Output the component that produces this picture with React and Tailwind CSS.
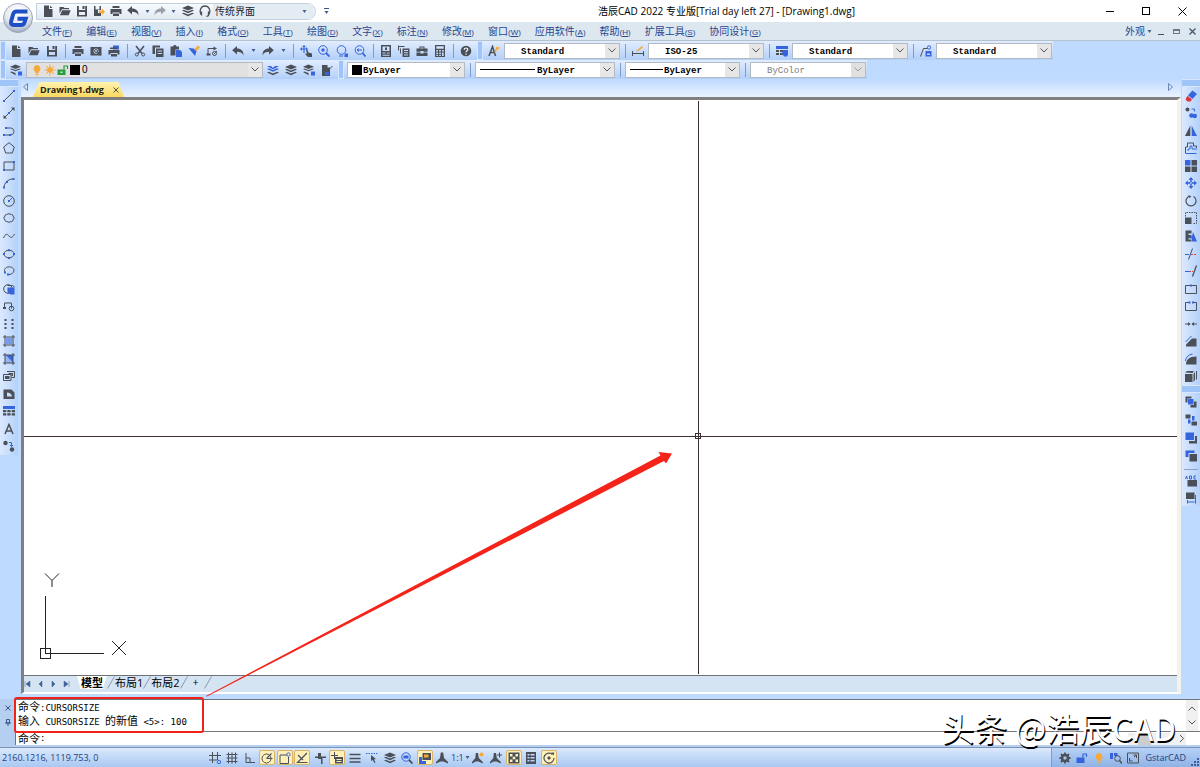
import { Fragment, useState } from "react";

const F = { fill: "#4a4f58", stroke: "none" };
const FB = { fill: "#3564dc", stroke: "none" };
const FO = { fill: "#f5a93a", stroke: "none" };
const SB = { stroke: "#3564dc" };

// every glyph is drawn on a 12 x 12 grid
const glyphs = {
  new: <path {...F} d="M2 0.5h5v3.5h3.5v8h-8.5zM8 0.5l2.5 2.5h-2.5z" />,
  open: <path {...F} d="M0.5 2h4l1 1h4.500v1.200h-7l-2.500 4zM3.200 5.200h8.500l-2 5h-8.700z" />,
  save: <path {...F} fillRule="evenodd" d="M1 1h1.800v4h6.400v-4h1.800v10.500h-10zM3 7v3h6v-3zM6.500 1h2v3h-2z" />,
  saveas: (
    <>
      <path {...F} d="M1 1h1.500v3.500h4v-3.500h1.500v4h-3v3h3v3h-7z" />
      <path {...FO} d="M6 5.500h3v-2l3 3.200-3 3.200v-2h-3z" />
    </>
  ),
  print: <path {...F} fillRule="evenodd" d="M2.500 1h7v2h-7zM0.500 4h11v5h-2v-1.500h-7v1.500h-2zM3 8.500h6v2.500h-6z" />,
  preview: (
    <>
      <path {...F} fillRule="evenodd" d="M0.500 2h11v8.500h-11zM6 3.500a2.600 2.600 0 1 0 0.010 0z" />
      <circle cx="6" cy="6" r="1.500" />
      <path d="M7 7l3.500 3.500" />
    </>
  ),
  plot: (
    <>
      <path {...FB} d="M5 0.500h6v4h-6z" />
      <path {...F} d="M2 2.500h7v1.500h-7zM0.500 5h11v4.500h-2v-1.500h-7v1.500h-2zM3 9h6v2.500h-6z" />
    </>
  ),
  cut: (
    <>
      <path strokeWidth="1.500" d="M2 1l6 7.500M10 1l-6 7.500" />
      <circle cx="2.800" cy="9.500" r="1.500" />
      <circle cx="9.200" cy="9.500" r="1.500" />
    </>
  ),
  copy: <path {...F} fillRule="evenodd" d="M0.500 0.500h7.500v2h-5v6.500h-2.500zM4 3.500h7.500v8.500h-7.500zM5.500 5.500v1h4.500v-1zM5.500 8v1h4.500v-1z" />,
  paste: (
    <>
      <path {...F} d="M0.500 1.500h2.500l1-1.500h1.500l1 1.500h2.500v3h-3.500v6h-5z" />
      <path {...FB} d="M6 5h4l2 2v5h-6z" />
    </>
  ),
  brush: (
    <>
      <path {...FO} d="M5.500 5l4.500-4.500 2 2-4.500 4.500z" />
      <path {...FB} d="M0.500 3l5 0.500 3 3-1.500 4.500z" />
    </>
  ),
  block: (
    <>
      <path d="M2 9.500v-6h6.500" />
      <path {...F} d="M7.500 1.500l3.500 2-3.500 2zM0.500 8.500h4v2h-4z" />
      <circle cx="8.500" cy="8.500" r="2" />
      <path d="M8 9l3-3" />
    </>
  ),
  undo: <path {...F} d="M5 1v2.500c4 0 6.500 2 6.500 7-1.500-3-3.500-3.700-6.500-3.700v2.700l-4.800-4.300z" />,
  redo: <path {...F} d="M7 1v2.500c-4 0-6.500 2-6.500 7 1.500-3 3.500-3.700 6.500-3.700v2.700l4.800-4.300z" />,
  pan: (
    <>
      <path {...FB} d="M4 0l2 2h-1.400v1.400h1.400v-1.400l2 2-2 2v-1.400h-1.400v3.400h-1.200v-3.400h-1.400v1.400l-2-2 2-2v1.400h1.400v-1.400h-1.400z" />
      <path {...F} d="M6 5.500l1.500-0.500 1 2.500 3.500 1v3.500h-4l-3-3 1-0.800 1.200 0.800z" />
    </>
  ),
  zoomRt: (
    <g {...SB}>
      <circle cx="5" cy="5" r="4.300" />
      <circle cx="5" cy="5" r="1.700" {...FB} />
      <path strokeWidth="1.800" d="M8 8l3.500 3.500" />
    </g>
  ),
  zoomWin: (
    <>
      <circle cx="5.500" cy="5" r="4.300" {...SB} />
      <path {...FB} d="M8.500 8.500h3.500v3.500h-3.500z" />
      <path d="M3 11h4" {...SB} />
    </>
  ),
  zoomPrev: (
    <g {...SB}>
      <circle cx="5.500" cy="5" r="4.300" />
      <path d="M3 5h5M5 3.500l-2 1.500 2 1.500" />
      <path strokeWidth="1.800" d="M8.500 8l3 3.500" />
    </g>
  ),
  props: <path {...F} fillRule="evenodd" d="M1 0h10v12h-10zM2.500 1.500v4.500h7v-4.500zM2.500 7.500v1h3v-1zM7 7.500v1h2.500v-1zM2.500 9.700v1h7v-1zM5 2.500h2v2.500h-2z" />,
  palette: (
    <>
      <path {...F} fillRule="evenodd" d="M4.500 3.500h7v8.500h-7zM6 5v1h4v-1zM6 7.200v1h4v-1zM6 9.400v1h4v-1z" />
      <path d="M0.500 1.500h6M2.500 3.500v5M0.500 0.500v5" />
    </>
  ),
  toolbox: <path {...F} fillRule="evenodd" d="M3.500 1.500h5v2h3v3.200h-4v-0.700h-3v0.700h-4v-3.200h3zM4.500 2.500v1h3v-1zM0.500 7.500h4v1h3v-1h4v3.500h-11z" />,
  calc: <path {...F} fillRule="evenodd" d="M1 0h10v12h-10zM2.300 1.300v2.400h7.400v-2.400zM2.300 5v1.500h1.700v-1.500zM5.200 5v1.500h1.700v-1.500zM8 5v1.500h1.700v-1.500zM2.300 7.400v1.500h1.700v-1.500zM5.200 7.400v1.500h1.700v-1.500zM8 7.400v3.600h1.700v-3.600zM2.300 9.700v1.300h1.700v-1.300zM5.200 9.700v1.300h1.700v-1.300z" />,
  help: (
    <>
      <circle cx="6" cy="6" r="5.300" {...F} />
      <path stroke="#fff" strokeWidth="1.200" d="M4.200 4.800c0-2.500 3.700-2.300 3.600-0.200 0 1.200-1.800 1.200-1.800 2.700M6 8.500v1.200" />
    </>
  ),
  textStyle: (
    <>
      <path strokeWidth="1.500" d="M1 11l3.500-9.500 3 9.500M2.500 7.500h4" />
      <path stroke="#f5a93a" strokeWidth="1.500" d="M7 8l2-6M8.500 4l3-1.500" />
    </>
  ),
  dimStyle: (
    <>
      <path {...FO} d="M4 6l6-5 1 1.500-5.500 4z" />
      <path d="M0.500 6v5M11.500 6v5M0.500 8.500h11" />
    </>
  ),
  tableStyle: (
    <>
      <path {...FB} d="M0 1h12v3h-12z" />
      <path {...F} d="M0 5h3v2h-3zM4 5h3v2h-3zM0 8h3v2h-3zM4 8h3v2h-3z" />
      <path {...FB} d="M7 5h5v4.500l-1 2h-3l-2-3z" />
    </>
  ),
  leaderStyle: (
    <>
      <path d="M0.500 11.500l3-8h4" />
      <circle cx="9" cy="2.500" r="1.700" {...SB} />
      <path {...FB} fillRule="evenodd" d="M5.500 6h6v5.500h-6zM7 8.500v1.500h3v-1.500z" />
    </>
  ),
  layers: <path {...F} d="M6 0.500l6 2.500-6 2.500-6-2.500zM0 5.500l1.700-0.700 4.300 1.700 4.300-1.700 1.700 0.700-6 2.700zM0 8.500l1.700-0.700 4.300 1.700 4.300-1.700 1.700 0.700-6 2.800z" />,
  layersProp: (
    <>
      <path {...F} d="M5.500 0.500l5.500 2.300-5.500 2.300-5.500-2.300zM0 5l1.500-0.600 4 1.700 4-1.700 1.500 0.600-5.500 2.300zM0 8l1.500-0.600 4 1.700v2.200z" />
      <path {...FB} d="M8 7.500h4v4h-4z" />
    </>
  ),
  layersMatch: (
    <>
      <path {...FB} d="M0 2l4 0 2 2 2-2 4 0-6 3.500zM0 5l2-0.700 4 2 4-2 2 0.700-6 2.800z" />
      <path {...F} d="M0 8.500l1.700-0.700 4.300 1.700 4.300-1.700 1.700 0.700-6 2.800z" />
    </>
  ),
  layerState: (
    <>
      <path {...F} d="M1 1h5.500v2.500h2.500v8.500h-8z" />
      <path {...FB} d="M4 8h4v3h-4z" />
      <path d="M8.500 5l3-3" />
    </>
  ),
  bulb: <path {...FO} d="M6 1a3.600 3.600 0 0 1 2 6.500l-0.400 1.500h-3.200l-0.400-1.500a3.600 3.600 0 0 1 2-6.500zM4.500 9.800h3v1.500h-3z" />,
  sun: (
    <>
      <circle cx="6" cy="6" r="2.800" {...FO} />
      <path stroke="#f5a93a" d="M6 0.500v11M0.500 6h11M2 2l8 8M10 2l-8 8" />
    </>
  ),
  unlock: (
    <>
      <path fill="#23a03c" stroke="none" fillRule="evenodd" d="M0.500 5.500h8v5.500h-8zM3.500 7.500v1.500h2v-1.500z" />
      <path stroke="#23a03c" strokeWidth="1.200" d="M7 5.500v-3.500h3.500v3" />
    </>
  ),
  unlockBlue: (
    <>
      <path {...FB} d="M0.500 5.500h8v5.500h-8z" />
      <path {...SB} strokeWidth="1.200" d="M7 5.500v-3.500h3.500v3" />
    </>
  ),
  headset: (
    <>
      <path d="M2 9.500c-2-4 0-8.500 4-8.500s6 4.500 4 8.500" strokeWidth="1.300" />
      <path d="M2.500 6.500v4M9.500 6.500v4l-2 1" strokeWidth="1.300" />
    </>
  ),

  // draw toolbar
  line: (<><path d="M1 11l10-10" /><path {...FB} d="M0 10h2v2h-2zM10 0h2v2h-2z" /></>),
  xline: (<><path d="M1.500 10.500l9-9" /><path {...F} d="M0.500 11.500v-3.500l3.500 3.500zM11.500 0.500v3.500l-3.500-3.500z" /><path {...FB} d="M5 5h2v2h-2z" /></>),
  pline: (<><path d="M1 10h6.500c4.500 0 4.500-7 0-7h-4.500" /><path {...FB} d="M0 9h2v2h-2zM6 9h2v2h-2zM2 2h2v2h-2z" /></>),
  polygon: <path d="M6 0.700l5.300 4.300-2 6h-6.600l-2-6z" />,
  rect: (<><path d="M1 2h10v8h-10z" /><path {...FB} d="M0 9h2v2h-2zM10 1h2v2h-2z" /></>),
  arc: (<><path d="M1 11c0-5 4-9 9-9" /><path {...FB} d="M0 9.500h2v2h-2zM3 4h2v2h-2zM9.500 1h2v2h-2z" /></>),
  circle: (<><circle cx="6" cy="6" r="5.300" /><path d="M6 6l3.500-3.500" {...SB} /><path {...FB} d="M5 5h2v2h-2z" /></>),
  cloud: <path d="M3.500 2.500q2.500-1.500 5 0 1.500 0 1.500 1.500 2.500 2 0 4 0 1.500-1.500 1.500-2.500 1.500-5 0-1.500 0-1.500-1.500-2.500-2 0-4 0-1.500 1.500-1.500z" />,
  spline: <path d="M0.500 8c2-5 4-4 5.500-2s3.500 2 5.500-2" />,
  ellipse: (<><ellipse cx="6" cy="6" rx="5" ry="3.800" /><path {...FB} d="M0 5h2v2h-2zM10 5h2v2h-2zM5 1.200h2v2h-2zM5 9h2v2h-2z" /></>),
  ellipseArc: (<><path d="M2 7c-3-6 9-7 9-1.500 0 2.500-3 4.500-6 4" /><path {...FB} d="M1 6.500h2v2h-2zM4 8.500h2v2h-2z" /></>),
  insert: (<><circle cx="5" cy="6" r="4.300" /><path d="M4.500 2.500h5l2 1.500" /><path {...FB} d="M4.500 4.500h7v7h-4l-3-2z" /></>),
  makeBlock: (<><path d="M1.500 8v-5h7v4" /><path {...F} d="M0 7h3v2h-3z" /><circle cx="8.500" cy="8.500" r="2.300" /><path d="M8.500 8.500v-3" /></>),
  points: <path {...F} d="M1.500 1h2v2h-2zM8.500 1h2v2h-2zM1.500 5h2v2h-2zM8.500 5h2v2h-2zM1.500 9h2v2h-2zM8.500 9h2v2h-2z" />,
  hatch: (<><path {...FB} fillOpacity="0.550" d="M3 3h6v6h-6z" /><path d="M2 0v12M10 0v12M0 2h12M0 10h12" /></>),
  gradient: (<><path {...FB} fillOpacity="0.350" d="M2 2h8v8h-8z" /><path {...FB} d="M3 2h7v7.500z" /><path d="M2 0v12M10 0v12M0 2h12M0 10h12" /></>),
  region: (<><path d="M4 1.500h7.500v6h-3M0.500 4.500h7.500v6h-7.500z" /><path {...F} d="M2 6h4.500v3h-4.500zM5.500 3h4.500v3h-1.500v-2h-3z" /></>),
  wipeout: <path {...F} fillRule="evenodd" d="M0.500 1.500h8l3 3v6.500h-11zM4 4.500v4h5c0-2-2-4-5-4z" />,
  table: (<><path {...FB} d="M0 1h12v3h-12z" /><path {...F} d="M0 5h3.300v2.200h-3.300zM4.300 5h3.300v2.200h-3.300zM8.700 5h3.300v2.200h-3.300zM0 8.300h3.300v2.200h-3.300zM4.300 8.300h3.300v2.200h-3.300zM8.700 8.300h3.300v2.200h-3.300z" /></>),
  mtext: <path strokeWidth="1.500" d="M2 11l4-9.500 4 9.500M3.500 8h5" />,
  addSel: (<><circle cx="2.500" cy="3" r="2.200" {...F} /><circle cx="9" cy="9.500" r="2.200" {...F} /><path {...SB} d="M6 2.500h2.500v4M7 5l1.500 1.500 1.500-1.500" /></>),

  // modify toolbar
  erase: (<><path {...FB} d="M7.500 0.500l4.500 3.500-4.500 5-4.500-3.800z" /><path fill="#e0323c" stroke="none" d="M2.500 5.800l4.500 3.800-1.500 1.900h-3l-2-2z" /></>),
  copyObj: (<><circle cx="2.500" cy="2.500" r="2" {...F} /><circle cx="6.500" cy="8.500" r="2.300" {...FB} /><circle cx="9.800" cy="9" r="2.200" {...FB} /><path {...SB} d="M6.500 2h3v2.500" /></>),
  mirror: (<><path {...F} d="M5.300 0.500v10.500h-5.300z" /><path {...FB} d="M6.700 0.500v10.500h5.300z" /></>),
  offset: (<><path d="M0.500 11v-6h2v-4h6v3h3v2" /><path {...SB} d="M3 9v-2h2v-3h2v3h5M0.500 11.500h11" /></>),
  array: (<><path {...FB} d="M0 0h5.500v5.500h-5.500z" /><path {...F} d="M6.500 0h5.500v5.500h-5.500zM0 6.500h5.500v5.500h-5.500zM6.500 6.500h5.500v5.500h-5.500z" /></>),
  move: (<><path {...SB} strokeWidth="1.300" d="M6 1v10M1 6h10" /><path {...FB} d="M6 0l2.500 3h-5zM6 12l2.500-3h-5zM0 6l3-2.500v5zM12 6l-3-2.500v5z" /><circle cx="6" cy="6" r="1.300" fill="#fff" {...SB} /></>),
  rotate: (<><path strokeWidth="1.200" d="M8.500 1.600a5 5 0 1 1-4-0.400" /><path {...F} d="M3.500 0l3 1.500-2.500 1.500z" /></>),
  scale: (<><path {...F} d="M0 5.500h6.500v6.500h-6.500z" /><path strokeDasharray="1.500 1" d="M0.500 4.500v-4h11v11h-4" /></>),
  stretch: (<><path {...F} d="M0.500 0.500h6v3h-3v1.500h3v3h-3v1.500h3v2h-6z" /><path {...FB} d="M8 2l4 9.500h-5v-3h-3v-2h3z" /></>),
  trim: (<><path d="M7.500 0.500l-4 11" /><path stroke="#d3444d" strokeDasharray="2 1" d="M6 6.500h6" /><path d="M0 6.500h4" {...SB} /></>),
  extend: (<><path strokeWidth="1.300" d="M11.500 0.500l-4 11" /><path stroke="#d3444d" strokeDasharray="2 1" d="M4 6.500h4" /><path d="M0 6.500h4" {...SB} /></>),
  breakPt: (<><path d="M0.500 2.500h11v8h-11z" /><path {...FB} d="M5 1.500h2v2h-2z" /></>),
  breakTwo: (<><path d="M4 2.500h-3.500v8h11v-8h-3.500" /><path {...FB} d="M3.500 1.500h2v2h-2zM7 1.500h2v2h-2z" /></>),
  join: (<><path d="M0 6h5M7 6h5" /><path {...F} d="M3 4l2.500 2-2.500 2zM9 4l-2.500 2 2.500 2z" /></>),
  chamfer: (<><path {...F} d="M1 11.500v-2l6-6h4.500v8z" /><path {...SB} d="M0.500 7l6-6" /></>),
  fillet: (<><path {...F} d="M1 11.500c0-4.500 3-8 10.500-8v8z" /><path {...SB} d="M0.500 8c0.500-4 3-6.500 7-7" /></>),
  explode: (<><path {...F} d="M0 4h7.500v8h-7.500zM0 2.500l2-1.500h7l-1.500 2zM8.500 4l1.500-2v8l-1.500 2zM11 1h1v8l-1 1z" /></>),
  front: (<><path {...F} d="M0.500 0.500h6v2h-4v4h-2zM9 5.500h2.500v6h-6v-2.500h3.500z" /><path {...FB} d="M3 3h5.500v5.500h-5.500z" /></>),
  between: (<><path {...F} d="M0.500 0.500h5v4h-5zM6.500 7.500h5.500v4h-5.500z" /><path {...FB} d="M7 2h2.500v4.500h-2.500zM3 5.500h2.500v4h-2.500z" /></>),
  above: (<><path {...FB} d="M0.500 0.500h8.500v7.500h-8.500z" /><path {...F} d="M10 4h2v7.500h-8v-2.500h6z" /></>),
  under: (<><path {...FB} d="M0.500 0.500h9v2.500h-6v4h-3z" /><path {...F} d="M4.500 4h7.500v7.500h-7.500z" /></>),
  textFront: (<><path {...F} d="M2.500 5h9.500v6.500h-9.500z" /><path {...SB} d="M0.500 4l1-3 1 3M4.500 1h2v3h-2zM11 1h-2v3h2" /></>),
  dimFront: (<><path {...F} d="M1 0.500h8.500v6.500h-8.500z" /><path {...SB} d="M2.500 8v3.500M2.500 10h7M10.500 3v8.500" /></>),

  // status bar
  snap: (<><path d="M3.500 0v11M8.500 0v8M0 3.500h12M0 8h8" /><circle cx="10" cy="10" r="1.700" {...SB} /></>),
  grid: <path d="M2.500 0.500v11M6 0.500v11M9.500 0.500v11M0.500 2.500h11M0.500 6h11M0.500 9.500h11" />,
  ortho: <path d="M2 1v9.500h9M2 6h4v4" />,
  polar: (<><circle cx="5.500" cy="6.500" r="4.500" /><path strokeWidth="1.200" d="M5.500 6.500h6M5.500 6.500l5-5" /></>),
  osnap: (<><path d="M8 3h-7v8.500h8.500v-6.500" /><circle cx="9.500" cy="2.500" r="1.700" {...SB} /></>),
  otrack: <path strokeWidth="1.200" d="M2 3l5 5M11 1l-9.500 9.500h10" />,
  ducs: <path {...F} d="M4 1h3v6h-3zM1 4.500h11v1.500h-11zM7 6h1.500v6h-1.500z" />,
  dyn: (<><path d="M3.500 0v7M0 3.500h7" /><path {...F} fillRule="evenodd" d="M4 5h8v6.500h-8zM5.500 7v1h5v-1zM5.500 9v1h5v-1z" /></>),
  lwt: <path strokeWidth="1.300" d="M0.500 2.500h11M0.500 6.500h11M0.500 10h11" />,
  cycle: (<><path strokeDasharray="1.500 1" d="M0 1.500h12" {...SB} /><path {...F} d="M5 3l5 4-2 0.500 1.500 3-1.200 0.500-1.500-3-1.800 1z" /></>),
  isolate: (<><circle cx="5" cy="5" r="4.200" {...SB} /><path {...FB} d="M2.500 3.500h5v3h-5z" /><path strokeWidth="1.800" d="M8 8l3.500 3.500" /></>),
  quick: (<><path {...FB} d="M0 5h3v4h4v3h-7z" /><path {...F} d="M3.500 1h8.500v7h-8.500z" /><path {...FO} d="M5 2.500h4.500v3h-4.500z" /></>),
  scaleMark: <path {...F} d="M4.800 0.500h2.400l0.800 5.500 4 4v1.500l-4.500-2h-3l-4.500 2v-1.500l4-4z" />,
  scaleSun: (<><path {...F} d="M3.800 1h2.200l0.800 5 4 4v1.500l-4.300-2h-2.700l-3.800 2v-1.500l3.300-4z" /><circle cx="9.500" cy="2.500" r="2" {...FO} /></>),
  scaleAdd: (<><path {...F} d="M3.800 1h2.200l0.800 5 4 4v1.500l-4.300-2h-2.700l-3.800 2v-1.500l3.300-4z" /><path d="M9.500 0.500v5M7 3h5" /></>),
  checker: <path {...F} fillRule="evenodd" d="M0.500 0.500h11v11h-11zM2 2v2.500h2.500v-2.500zM7.500 2v2.500h2.500v-2.500zM4.700 4.700v2.600h2.600v-2.600zM2 7.500v2.500h2.500v-2.500zM7.500 7.500v2.500h2.500v-2.500z" />,
  sheet: <path {...F} fillRule="evenodd" d="M1 0h10v12h-10zM2.500 2v1.500h2v-1.500zM5.500 2v1.500h4v-1.500zM2.500 5v1.500h2v-1.500zM5.500 5v1.500h4v-1.500zM2.500 8v1.500h2v-1.500zM5.500 8v1.500h4v-1.500z" />,
  refresh: (<><path strokeWidth="1.200" d="M9.500 2.500a5 5 0 1 0 1.500 3.500M4 6h4" /><path {...F} d="M8 0.500h3v3zM5 4.500h2v3h-2z" /></>),
  gear: (<><circle cx="6" cy="6" r="3" strokeWidth="2.500" /><path strokeWidth="1.800" d="M6 0.500v2M6 9.500v2M0.500 6h2M9.500 6h2M2 2l1.500 1.500M8.500 8.500l1.500 1.500M10 2l-1.500 1.500M3.500 8.500l-1.500 1.500" /></>),
  find: (<><path {...FB} d="M0 1h3v6h-3zM4 1h3.500v3h-3.500z" /><circle cx="7.500" cy="6.500" r="2.800" /><path strokeWidth="1.500" d="M9.500 8.500l2.500 3" /></>),
  screen: <path d="M0.500 1h11v10h-11zM2.500 6v3h3M9.500 6v-3h-3M7 5l2.500-2" />,
};

function Icon({ name, className = "size-3" }) {
  return (
    <svg viewBox="0 0 12 12" fill="none" stroke="#4a4f58" className={`${className} shrink-0`} aria-hidden="true">
      {glyphs[name]}
    </svg>
  );
}

function Caret({ className = "" }) {
  return (
    <svg viewBox="0 0 5 3" className={`h-[3px] w-[5px] shrink-0 fill-[#46618f] ${className}`} aria-hidden="true">
      <path d="M0.500 0h4l-2 3z" />
    </svg>
  );
}

function Chevron() {
  return (
    <svg viewBox="0 0 8 5" fill="none" stroke="#555" className="h-[5px] w-2" aria-hidden="true">
      <path d="M0.500 0.500l3.500 3.500 3.500-3.500" />
    </svg>
  );
}

function Tool({ name, className = "w-[18px]" }) {
  return (
    <button aria-label={name} className={`flex shrink-0 items-center justify-center ${className}`}>
      <Icon name={name} />
    </button>
  );
}

function DropTool({ label }) {
  return (
    <button aria-label={label} className="flex w-3 shrink-0 items-center justify-center">
      <Caret />
    </button>
  );
}

const Sep = () => (
  <span className="flex w-2 shrink-0 items-center justify-center">
    <span className="h-3.5 w-px bg-[#7f9cc8]" />
  </span>
);

const Grip = () => (
  <span className="h-full w-[6px] shrink-0 border border-[#d7e7ff] bg-[#9fc5f8]" />
);

// items: "|" is a separator, "v" a drop-down arrow
function Tools({ items }) {
  return items.map((item, i) => (
    <Fragment key={i}>
      {item === "|" ? <Sep /> : item === "v" ? <DropTool label="more" /> : <Tool name={item} />}
    </Fragment>
  ));
}

function Combo({ label, value, lead, width = "w-[116px]", pad = "pl-4", tone = "bg-white text-black", disabled, plain }) {
  return (
    <div className={`mx-px flex h-4 shrink-0 items-center border border-[#b4bac3] ${width} ${tone}`}>
      <div className={`flex h-full min-w-0 flex-1 items-center ${pad}`}>
        {lead}
        <select
          aria-label={label}
          disabled={disabled}
          className={`min-w-0 flex-1 appearance-none bg-transparent outline-none ${
            plain
              ? "font-['Liberation_Sans',sans-serif] text-[10px] leading-none"
              : "pt-0.5 font-['Liberation_Mono',monospace] text-[9px] leading-[12px]"
          } ${plain || disabled ? "font-normal" : "font-bold"}`}
        >
          <option>{value}</option>
        </select>
      </div>
      <span className={`flex h-full w-3.5 items-center justify-center ${disabled ? "bg-[#cccccc] opacity-60" : "bg-[#e6e6e6]"}`}>
        <Chevron />
      </span>
    </div>
  );
}

const band = "flex h-full items-center bg-linear-to-b from-[#e2edff] to-[#b2cff8]";

const menus = [
  ["文件", "F"], ["编辑", "E"], ["视图", "V"], ["插入", "I"], ["格式", "O"],
  ["工具", "T"], ["绘图", "D"], ["文字", "X"], ["标注", "N"], ["修改", "M"],
  ["窗口", "W"], ["应用软件", "A"], ["帮助", "H"], ["扩展工具", "S"], ["协同设计", "G"],
];

const drawTools = [
  "line", "xline", "pline", "polygon", "rect", "arc", "circle", "cloud", "spline", "ellipse", "ellipseArc",
  "insert", "makeBlock", "points", "hatch", "gradient", "region", "wipeout", "table", "mtext", "addSel",
];

const modifyTools = [
  "erase", "copyObj", "mirror", "offset", "array", "move", "rotate", "scale", "stretch",
  "trim", "extend", "breakPt", "breakTwo", "join", "chamfer", "fillet", "explode",
];

const statusTools = [
  ["snap"], ["grid"], ["ortho"], ["polar", true], ["osnap", true], ["otrack", true], ["ducs"], ["dyn", true],
  ["lwt"], ["cycle"], ["layers"], ["isolate"], ["quick", true], ["scaleMark"],
];

const annoTools = [["scaleSun"], ["scaleAdd"], ["checker", true], ["sheet"], ["refresh", true]];

function StatusTool({ name, on }) {
  return (
    <button
      aria-label={name}
      aria-pressed={!!on}
      className={`flex h-[15px] w-4 items-center justify-center justify-self-center rounded-[2px] border ${
        on ? "border-[#d9b368] bg-[#fff0b8]" : "border-transparent"
      }`}
    >
      <Icon name={name} />
    </button>
  );
}

function Logo() {
  return (
    <svg viewBox="0 0 32 32" className="absolute top-0.5 left-0.5 z-10 size-8" aria-hidden="true">
      <defs>
        <radialGradient id="orb" cx="50%" cy="25%" r="80%">
          <stop offset="0" stopColor="#ffffff" />
          <stop offset="0.600" stopColor="#e3e7ee" />
          <stop offset="1" stopColor="#8f9cb3" />
        </radialGradient>
      </defs>
      <circle cx="16" cy="16" r="14.500" fill="url(#orb)" stroke="#9aa7bb" />
      <path
        d="M25.500 9.500h-11q-2.500 0-3.300 2.500l-2 7q-1 4 2.500 4h7.500q2.500 0 3.300-2.500l1.200-3.700h-8.200"
        fill="none"
        stroke="#1d50c6"
        strokeWidth="4"
      />
    </svg>
  );
}

function TitleBar() {
  return (
    <header className="flex h-[22px] items-center bg-white">
      <div className="ml-9 flex h-[17px] items-stretch rounded-r-full border border-[#c3cfdd] bg-linear-to-b from-[#f8fbfe] to-[#e0e8f1] px-0.5">
        {["new", "open", "save", "saveas", "print", "undo"].map((n) => (
          <Tool key={n} name={n} className="w-[17px]" />
        ))}
        <DropTool label="undo list" />
        <span className="flex opacity-50">
          <Tool name="redo" className="w-3.5" />
        </span>
        <DropTool label="redo list" />
        <Tool name="layers" className="w-[17px]" />
        <Tool name="headset" className="w-[17px]" />
        <div className="flex w-[100px] items-center bg-[#e3ebf3] pr-1.5 pl-0.5">
          <select
            aria-label="workspace"
            className="min-w-0 flex-1 appearance-none bg-transparent text-[10px] leading-none text-[#1c2330] outline-none"
          >
            <option>传统界面</option>
          </select>
          <Caret />
        </div>
      </div>
      <button aria-label="customize" className="ml-2 flex flex-col items-center gap-0.5">
        <span className="h-px w-[5px] bg-[#3b537d]" />
        <Caret />
      </button>
      <h1 className="flex-1 pl-8 text-center text-[10px] text-black">
        浩辰CAD 2022 专业版[Trial day left 27] - [Drawing1.dwg]
      </h1>
      <button aria-label="minimize" className="flex h-full w-9 items-center justify-center">
        <span className="h-px w-2 bg-black" />
      </button>
      <button aria-label="maximize" className="flex h-full w-9 items-center justify-center">
        <span className="size-2 border border-black" />
      </button>
      <button aria-label="close" className="flex h-full w-9 items-center justify-center">
        <svg viewBox="0 0 9 9" className="size-[9px] stroke-black"><path d="M0.500 0.500l8 8M8.500 0.500l-8 8" /></svg>
      </button>
    </header>
  );
}

function MenuBar() {
  return (
    <nav className="flex h-[19px] items-center border-b border-[#b4c1cf] bg-[#dde7ef] pl-[42px] text-[10px] text-[#27468f]">
      <div className="flex flex-1 gap-[14px]">
        {menus.map(([name, key]) => (
          <button key={key} className="flex items-baseline whitespace-nowrap">
            {name}
            <span className="font-['Liberation_Sans',sans-serif] text-[8px]">
              (<u>{key}</u>)
            </span>
          </button>
        ))}
      </div>
      <button className="flex items-center gap-0.5">
        外观
        <Caret />
      </button>
      <div className="flex items-center gap-[9px] pr-1 pl-1.5">
        <button aria-label="minimize drawing" className="flex h-2 w-1.5 items-end"><span className="h-px w-full bg-[#42506a]" /></button>
        <button aria-label="restore drawing" className="h-[5px] w-[7px] border border-t-2 border-[#6b7688]" />
        <button aria-label="close drawing">
          <svg viewBox="0 0 7 7" className="size-[7px] stroke-[#42506a]"><path d="M0.500 0.500l6 6M6.500 0.500l-6 6" strokeWidth="1.200" /></svg>
        </button>
      </div>
    </nav>
  );
}

function Toolbars() {
  return (
    <div className="bg-[#bedaff]">
      <div className="flex h-[19px] items-center">
        <div className={band}>
          <span className="flex h-full w-[7px]"><Grip /></span>
          <Tools
            items={[
              "new", "open", "save", "|", "print", "preview", "plot", "|", "cut", "copy", "paste", "brush", "block", "|",
              "undo", "v", "redo", "v", "|", "pan", "zoomRt", "zoomWin", "zoomPrev", "|",
              "props", "palette", "toolbox", "calc", "|", "help",
            ]}
          />
        </div>
        <div className={band}>
          <span className="flex h-full w-2.5 pl-0.5"><Grip /></span>
          <Tool name="textStyle" />
          <Combo label="text style" value="Standard" />
          <Sep />
          <Tool name="dimStyle" />
          <Combo label="dimension style" value="ISO-25" />
          <Sep />
          <Tool name="tableStyle" />
          <Combo label="table style" value="Standard" />
          <Sep />
          <Tool name="leaderStyle" />
          <Combo label="leader style" value="Standard" />
        </div>
      </div>
      <div className="flex h-[19px] items-center">
        <div className={band}>
          <span className="flex h-full w-[7px]"><Grip /></span>
          <Tool name="layersProp" />
          <Combo
            label="layer"
            value="0"
            plain
            width="w-[237px]"
            pad="pl-1"
            tone="bg-[#e1e1e1] text-black"
            lead={
              <span className="mr-0.5 flex items-center gap-px">
                <Icon name="bulb" />
                <Icon name="sun" />
                <Icon name="unlock" />
                <span className="size-[10px] bg-black" />
              </span>
            }
          />
          <Tools items={["layersMatch", "layers", "layersProp", "layerState"]} />
        </div>
        <div className={band}>
          <span className="flex h-full w-2.5 pl-0.5"><Grip /></span>
          <Combo label="color" value="ByLayer" width="w-[118px]" pad="pl-1" lead={<span className="mr-px size-[10px] bg-black" />} />
          <Sep />
          <Combo label="linetype" value="ByLayer" width="w-[140px]" pad="pl-1" lead={<span className="mr-0.5 h-px w-[55px] bg-black" />} />
          <Sep />
          <Combo label="lineweight" value="ByLayer" width="w-[115px]" pad="pl-1" lead={<span className="mr-px h-px w-[33px] bg-black" />} />
          <Sep />
          <Combo label="plot style" value="ByColor" disabled tone="bg-white text-[#7c7c7c]" />
        </div>
      </div>
    </div>
  );
}

const barShade = "bg-linear-to-r from-[#dbe9ff] to-[#b4d1f9]";

function DrawBar() {
  return (
    <aside className="w-[21px] bg-[#bedaff]">
      <div className={`w-[18px] ${barShade}`}>
        <div className="h-2 border-y border-[#d7e7ff] bg-[#9fc5f8]" />
        <div className="flex h-[368px] flex-col">
          {drawTools.map((n) => <Tool key={n} name={n} className="flex-1" />)}
        </div>
      </div>
    </aside>
  );
}

function ModifyBar() {
  return (
    <aside className="w-[19px] bg-[#bedaff] pl-px">
      <div className={barShade}>
        <div className="h-2 border-y border-[#d7e7ff] bg-[#9fc5f8]" />
        <div className="flex h-[298px] flex-col">
          {modifyTools.map((n) => <Tool key={n} name={n} className="flex-1" />)}
        </div>
        <div className="h-2 border-y border-[#d7e7ff] bg-[#9fc5f8]" />
        <div className="flex h-[72px] flex-col">
          {["front", "between", "above", "under"].map((n) => <Tool key={n} name={n} className="flex-1" />)}
        </div>
        <div className="mx-0.5 mt-1 mb-0.5 h-px bg-[#8aa3c6]" />
        <div className="flex h-[34px] flex-col">
          {["textFront", "dimFront"].map((n) => <Tool key={n} name={n} className="flex-1" />)}
        </div>
      </div>
    </aside>
  );
}

function Canvas() {
  return (
    <div className="relative flex-1 overflow-hidden bg-white">
      <svg className="absolute inset-0 size-full" shapeRendering="crispEdges">
        <g stroke="#3a3033" fill="none">
          <line x1="0" x2="100%" y1="336.500" y2="336.500" />
          <line x1="674.500" x2="674.500" y1="1" y2="574" />
          <rect x="671.500" y="333.500" width="5" height="5" />
        </g>
        <g stroke="#222" fill="none">
          <path d="M21.500 553.500v-58M21.500 553.500h58" />
          <path d="M16.500 548.500h10v10h-10z" />
        </g>
      </svg>
      <svg className="absolute inset-0 size-full" fill="none" stroke="#222">
        <path d="M21 473.500l7 7 7-7M28 480.500v6.500M88 541l14 14M102 541l-14 14" />
      </svg>
    </div>
  );
}

function Slash() {
  return (
    <svg viewBox="0 0 8 13" className="h-[13px] w-2 shrink-0" fill="none" stroke="#8a98aa" aria-hidden="true">
      <path d="M0.500 12.500l7-12" />
    </svg>
  );
}

function LayoutTabs() {
  const navs = ["M1 1v6M6 1l-4 3 4 3z", "M5 1l-3 3 3 3z", "M2 1l3 3-3 3z", "M6 1v6M1 1l4 3-4 3z"];
  return (
    <div className="flex h-[17px] items-start border-t border-[#6e7278] bg-[#d5e4f2] text-[11px] leading-[13px] text-black">
      <div className="flex h-[15px] w-[53px] items-center gap-1.5">
        {navs.map((d) => (
          <button key={d} aria-label="scroll tabs">
            <svg viewBox="0 0 7 8" className="h-2 w-[7px] fill-[#3f6096] stroke-[#3f6096]" strokeWidth="0.500"><path d={d} /></svg>
          </button>
        ))}
      </div>
      <button className="bg-white px-1 font-bold [clip-path:polygon(0_0,100%_0,86%_100%,12%_100%)]">模型</button>
      <Slash />
      <button>布局1</button>
      <Slash />
      <button>布局2</button>
      <Slash />
      <button className="w-4 text-[10px]">+</button>
      <Slash />
    </div>
  );
}

function DrawingArea() {
  return (
    <section className="flex min-w-0 flex-1 flex-col bg-[#bedaff]">
      <div className="flex h-[18px] items-end bg-linear-to-b from-[#bedaff] to-[#e9f2ff]">
        <button aria-label="previous tab" className="mb-1.5 ml-0.5 w-2.5">
          <svg viewBox="0 0 5 8" className="h-2 w-[5px] fill-none stroke-[#6d87b5]"><path d="M4.500 0.500v7l-4-3.500z" /></svg>
        </button>
        <div className="flex h-[15px] w-[91px] items-center bg-linear-to-b from-[#fff3b0] to-[#fbd95c] pl-[7px] [clip-path:polygon(7%_0,94%_0,100%_100%,0_100%)]">
          <button className="flex-1 text-left text-[9px] font-bold text-[#231f12]">Drawing1.dwg</button>
          <button aria-label="close tab" className="mr-1 flex h-full w-2 items-center justify-center">
            <svg viewBox="0 0 6 6" className="size-1.5 stroke-[#55523c]"><path d="M0.500 0.500l5 5M5.500 0.500l-5 5" /></svg>
          </button>
        </div>
        <span className="flex-1" />
        <button aria-label="next tab" className="mr-2 mb-1.5">
          <svg viewBox="0 0 5 8" className="h-2 w-[5px] fill-none stroke-[#6d87b5]"><path d="M0.500 0.500v7l4-3.500z" /></svg>
        </button>
      </div>
      <div className="flex flex-1 flex-col border-t-3 border-r-4 border-b-2 border-l-3 border-t-[#808080] border-r-[#f3f2ec] border-b-white border-l-[#808080]">
        <Canvas />
        <LayoutTabs />
      </div>
      <div className="h-[5px]" />
    </section>
  );
}

const mono = "font-['DejaVu_Sans_Mono',monospace] text-[9px] leading-none";

function CommandPanel() {
  const [command, setCommand] = useState("");
  return (
    <section className="relative flex h-12 bg-[#b4cfef]">
      <div className="flex w-[15px] flex-col items-center gap-2 pt-1.5">
        <button aria-label="close command window">
          <svg viewBox="0 0 6 6" className="size-1.5 stroke-[#35568f]"><path d="M0.500 0.500l5 5M5.500 0.500l-5 5" /></svg>
        </button>
        <button aria-label="pin command window">
          <svg viewBox="0 0 6 7" className="h-[7px] w-1.5 fill-none stroke-[#35568f]"><path d="M1.500 0.500h3v3.500h-3zM0 4h6M3 4v3" /></svg>
        </button>
      </div>
      <div className="mb-0.5 flex min-w-0 flex-1 flex-col border-t border-l border-[#6d7580] bg-white text-[11px] text-black">
        <div className="flex h-8 border-b border-[#777]">
          <div className="flex-1 pl-0.5 leading-[14px] whitespace-pre">
            <p className="h-[14px]">命令<span className={mono}>:CURSORSIZE</span></p>
            <p className="h-[14px]">输入<span className={mono}> CURSORSIZE </span>的新值<span className={mono}>{" <5>: 100"}</span></p>
          </div>
          <div className="mr-0.5 flex w-3 flex-col items-center justify-between bg-[#f0f0f0] py-1.5">
            <span className="rotate-180"><Chevron /></span>
            <Chevron />
          </div>
        </div>
        <label className="flex flex-1 items-center pl-0.5 leading-[13px]">
          命令<span className={mono}>:</span>
          <input
            value={command}
            onChange={(e) => setCommand(e.target.value)}
            className={`h-3 min-w-0 flex-1 bg-transparent pl-1 outline-none ${mono}`}
          />
          <span className="mr-[14px] flex h-3 w-[58px] items-center bg-[#f0f0f0] pl-2.5">
            <span className="h-full w-[13px] bg-[#cdcdcd]" />
            <span className="ml-auto -rotate-90"><Chevron /></span>
          </span>
        </label>
      </div>
      <div className="absolute -top-0.5 left-[14px] h-9 w-[190px] rounded-[3px] border-2 border-[#f0231b]" />
      <p className="absolute right-6 bottom-0.5 font-['Noto_Sans_CJK_SC',sans-serif] text-[33px] leading-[36px] whitespace-nowrap text-white [text-shadow:1px_2px_0_#000]">
        头条 @浩辰CAD
      </p>
    </section>
  );
}

function StatusBar() {
  return (
    <footer className="flex h-5 items-center border-t border-[#7d93b5] bg-linear-to-b from-[#dbe9fc] to-[#a9c8f2] text-[9px] text-[#1d4280]">
      <span className="w-[206px] pl-0.5">2160.1216, 1119.753, 0</span>
      <div className="grid w-[245px] grid-cols-14">
        {statusTools.map(([name, on]) => (
          <StatusTool key={name} name={name} on={on} />
        ))}
      </div>
      <button className="flex items-center gap-px">
        1:1
        <Caret />
      </button>
      <div className="grid w-[88px] grid-cols-5">
        {annoTools.map(([name, on]) => (
          <StatusTool key={name} name={name} on={on} />
        ))}
      </div>
      <div className="ml-auto flex h-full items-center border-l border-[#7f9dca] bg-linear-to-b from-[#b7d1f6] to-[#8fb3e6] pl-1">
        {["gear", "unlockBlue", "bulb", "find", "screen"].map((n) => (
          <Tool key={n} name={n} className="w-[17px]" />
        ))}
        <span className="pl-1">GstarCAD</span>
        <svg viewBox="0 0 10 10" className="ml-1 size-2.5 self-end fill-[#3b5f9c]" aria-hidden="true">
          <path d="M7 1h2v2h-2zM7 4h2v2h-2zM4 4h2v2h-2zM7 7h2v2h-2zM4 7h2v2h-2zM1 7h2v2h-2z" />
        </svg>
      </div>
    </footer>
  );
}

export default function App() {
  return (
    <div className="relative flex min-h-screen flex-col overflow-hidden bg-[#bedaff] font-['Open_Sans','Noto_Sans_CJK_SC',sans-serif]">
      <Logo />
      <TitleBar />
      <MenuBar />
      <Toolbars />
      <main className="flex flex-1">
        <DrawBar />
        <DrawingArea />
        <ModifyBar />
      </main>
      <CommandPanel />
      <StatusBar />
      <svg className="pointer-events-none absolute inset-0 size-full fill-[#f5241a]" aria-hidden="true">
        <path d="M206 696L660.500 455.500L658.500 452L672 453.500L666 463.500L664 461L207 696.500z" />
      </svg>
    </div>
  );
}
